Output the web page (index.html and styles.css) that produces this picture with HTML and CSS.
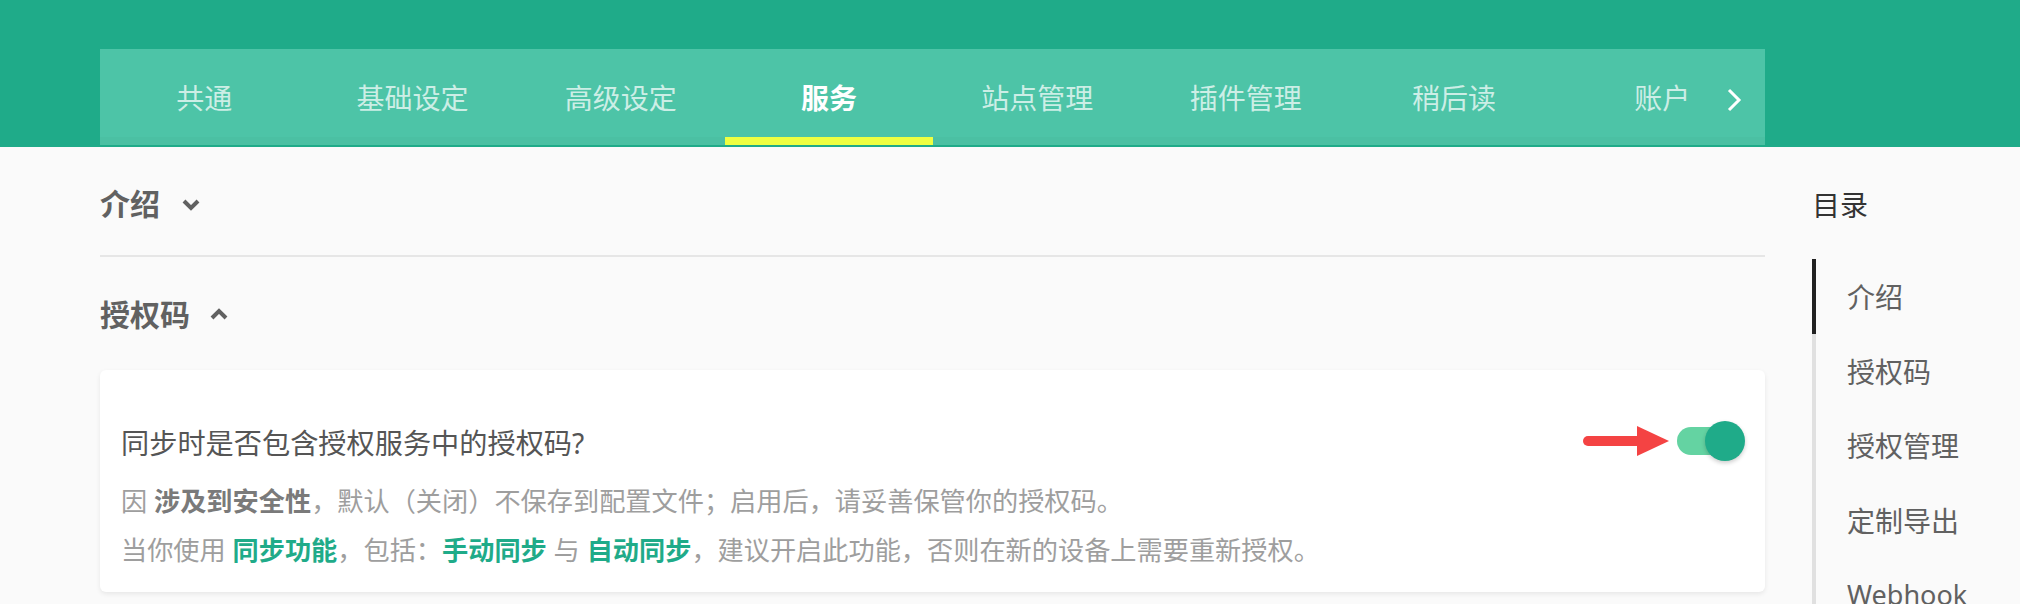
FILE: index.html
```html
<!DOCTYPE html>
<html lang="zh-CN">
<head>
    <meta charset="UTF-8">
    <title>设置 - 服务</title>
    <link rel="stylesheet" href="styles.css">
</head>
<body>

<header class="top">
    <nav class="tabs">
        <a class="tab" href="#">共通</a>
        <a class="tab" href="#">基础设定</a>
        <a class="tab" href="#">高级设定</a>
        <a class="tab active" href="#">服务</a>
        <a class="tab" href="#">站点管理</a>
        <a class="tab" href="#">插件管理</a>
        <a class="tab" href="#">稍后读</a>
        <a class="tab" href="#">账户</a>
        <span class="tabs-next">
            <svg width="16" height="24" viewBox="0 0 16 24"><polyline points="3,2 13,12 3,22" fill="none" stroke="#fff" stroke-width="3"/></svg>
        </span>
    </nav>
</header>

<main class="page">
    <section class="content">
        <div class="section-head">
            <h2>介绍</h2>
            <svg class="chev" width="20" height="14" viewBox="0 0 20 14"><polyline points="3,3 10,10 17,3" fill="none" stroke="#616161" stroke-width="4"/></svg>
        </div>
        <div class="divider"></div>
        <div class="section-head second">
            <h2>授权码</h2>
            <svg class="chev" width="20" height="14" viewBox="0 0 20 14"><polyline points="3,11 10,4 17,11" fill="none" stroke="#616161" stroke-width="4"/></svg>
        </div>

        <div class="card">
            <div class="card-row">
                <div class="question">同步时是否包含授权服务中的授权码?</div>
                <div class="switch-wrap">
                    <svg class="pointer" width="86" height="30" viewBox="0 0 86 30">
                        <line x1="5" y1="15" x2="56" y2="15" stroke="#f44343" stroke-width="10" stroke-linecap="round"/>
                        <polygon points="54,0 86,15 54,30" fill="#f44343"/>
                    </svg>
                    <div class="switch">
                        <span class="switch-track"></span>
                        <span class="switch-thumb"></span>
                    </div>
                </div>
            </div>
            <p class="desc">因 <b>涉及到安全性</b>，默认（关闭）不保存到配置文件；启用后，请妥善保管你的授权码。</p>
            <p class="desc">当你使用 <b class="hl">同步功能</b>，包括：<b class="hl">手动同步</b> 与 <b class="hl">自动同步</b>，建议开启此功能，否则在新的设备上需要重新授权。</p>
        </div>
    </section>

    <aside class="toc">
        <div class="toc-title">目录</div>
        <ul class="toc-list">
            <li class="active">介绍</li>
            <li>授权码</li>
            <li>授权管理</li>
            <li>定制导出</li>
            <li class="latin">Webhook</li>
        </ul>
    </aside>
</main>

</body>
</html>
```

FILE: styles.css
```css
body {
    font-family: "Noto Sans", "Noto Sans CJK SC", sans-serif;
    margin: 0;
    padding: 0;
    background-color: #fafafa;
    overflow: hidden;
}

.top {
    background-color: #1fab89;
    height: 147px;
    padding-top: 49px;
    box-sizing: border-box;
}

.tabs {
    position: relative;
    display: flex;
    margin-left: 100px;
    width: 1665px;
    height: 96px;
    background-color: #4dc4a7;
    overflow: hidden;
}

.tab {
    flex: 0 0 208.3px;
    display: flex;
    align-items: center;
    justify-content: center;
    box-sizing: border-box;
    padding-top: 8px;
    border-bottom: 8px solid rgba(0, 0, 0, 0.02);
    color: rgba(255, 255, 255, 0.72);
    font-size: 28px;
    text-decoration: none;
    white-space: nowrap;
}

.tab.active {
    color: #fff;
    font-weight: bold;
    border-bottom-color: #eeff41;
}

.tabs-next {
    position: absolute;
    right: 23px;
    top: 39px;
    display: flex;
}

.page {
    display: flex;
}

.content {
    width: 1665px;
    margin-left: 100px;
    padding-top: 17px;
}

.section-head {
    display: flex;
    align-items: center;
    height: 80px;
}

.section-head h2 {
    margin: 0;
    font-size: 30px;
    font-weight: bold;
    color: #616161;
    line-height: 40px;
}

.section-head .chev {
    margin-left: 21px;
    margin-top: 2px;
}

.section-head.second .chev {
    margin-left: 19px;
    margin-top: -2px;
}

.divider {
    height: 2px;
    background-color: #e6e6e6;
    margin-top: 11px;
}

.section-head.second {
    margin-top: 18px;
}

.card {
    margin-top: 15px;
    background-color: #fff;
    border-radius: 6px;
    box-shadow: 0 2px 5px rgba(0, 0, 0, 0.08);
    padding: 41px 20px 17px 21px;
}

.card-row {
    display: flex;
    align-items: center;
    justify-content: space-between;
    height: 60px;
    margin-bottom: 6px;
}

.question {
    font-size: 28.2px;
    color: #555;
    line-height: 40px;
    margin-top: 4px;
}

.switch-wrap {
    display: flex;
    align-items: center;
}

.pointer {
    margin-right: 8px;
}

.switch {
    position: relative;
    width: 68px;
    height: 40px;
}

.switch-track {
    position: absolute;
    left: 0;
    top: 6px;
    width: 62px;
    height: 28px;
    border-radius: 14px;
    background-color: #64d3a2;
}

.switch-thumb {
    position: absolute;
    right: 0;
    top: 0;
    width: 40px;
    height: 40px;
    border-radius: 50%;
    background-color: #1fab89;
    box-shadow: 0 2px 4px rgba(0, 0, 0, 0.2);
}

.desc {
    margin: 0;
    font-size: 26.2px;
    line-height: 49px;
    color: #9e9e9e;
    white-space: nowrap;
}

.desc b {
    color: #7a7a7a;
}

.desc b.hl {
    color: #1fab89;
}

.toc {
    margin-left: 47px;
    padding-top: 38px;
}

.toc-title {
    font-size: 28px;
    line-height: 40px;
    color: #333;
    margin-bottom: 34px;
}

.toc-list {
    list-style: none;
    margin: 0;
    padding: 0;
}

.toc-list li {
    height: 74.5px;
    display: flex;
    align-items: center;
    border-left: 4px solid #e0e0e0;
    padding-left: 31px;
    font-size: 28px;
    color: #616161;
}

.toc-list li.latin {
    font-size: 27px;
}

.toc-list li.active {
    border-left-color: #212121;
}
```
